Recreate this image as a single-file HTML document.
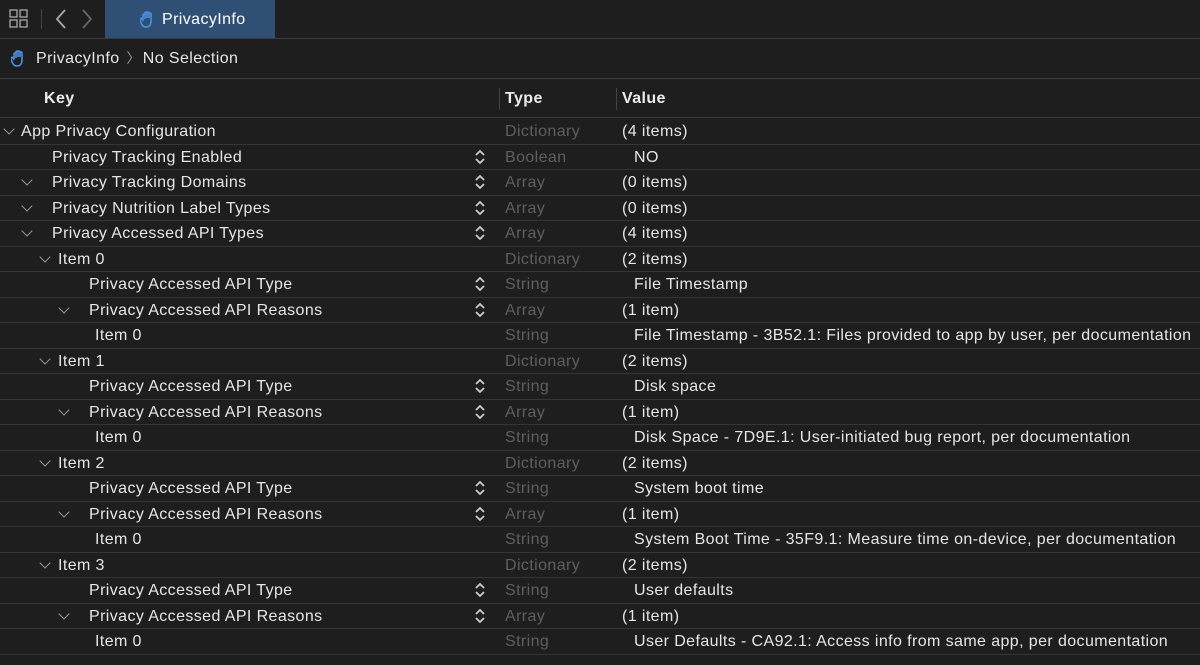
<!DOCTYPE html>
<html><head><meta charset="utf-8"><style>
body{margin:0;width:1200px;height:665px;background:#1e1e1e;overflow:hidden;font-family:"Liberation Sans",sans-serif;color:#e6e6e6;position:relative;letter-spacing:0.4px}
.a{position:absolute;white-space:nowrap}
.top{left:0;top:0;width:1200px;height:38px;background:#1e1e1e;border-bottom:1px solid #3a3a3a}
.tab{left:105px;top:0;width:170px;height:38px;background:#2f4f75}
.bc{left:0;top:39px;width:1200px;height:39px;border-bottom:1px solid #3c3c3c}
.hd{left:0;top:79px;width:1200px;height:38px;border-bottom:1px solid #3c3c3c}
.r{position:absolute;left:0;width:1200px;height:25.5px;border-bottom:1px solid #353535;font-size:16px;line-height:27px}
.r span{position:absolute;top:0;white-space:nowrap}
.t{left:505px;color:#5f5f5f}
.ch{width:7px;height:7px;border-right:1.8px solid #9a9a9a;border-bottom:1.8px solid #9a9a9a;transform:rotate(45deg);top:7px!important}
.st{position:absolute;left:474px;top:3px;width:12px;height:20px}
</style></head><body>
<div class="a top"></div>
<div class="a tab"></div>
<svg class="a" style="left:9px;top:9px" width="20" height="20" viewBox="0 0 20 20" fill="none" stroke="#aaa" stroke-width="1.3"><rect x="1" y="1" width="7" height="7"/><rect x="11" y="1" width="7" height="7"/><rect x="1" y="11" width="7" height="7"/><rect x="11" y="11" width="7" height="7"/></svg>
<div class="a" style="left:41px;top:9px;width:1px;height:20px;background:#444"></div>
<svg class="a" style="left:52px;top:8px" width="44" height="22" fill="none" stroke-width="1.8"><path d="M13 2 L5 11 L13 20" stroke="#aaa"/><path d="M31 2 L39 11 L31 20" stroke="#666"/></svg>
<svg class="a" style="left:140px;top:10px" width="14" height="19" viewBox="0 0 14 19" fill="none" stroke="#4a90e2" stroke-width="1.6"><path d="M3 10V5a1 1 0 0 1 2 0V9M5 8V3a1 1 0 0 1 2 0v5M7 8V3a1 1 0 0 1 2 0v5M9 8V4a1 1 0 0 1 2 0v7c0 4-2 6-5 6s-4-2-5-4l-1-3a1 1 0 0 1 2-1l1 2"/></svg>
<div class="a" style="left:162px;top:11px;font-size:16px;color:#fff">PrivacyInfo</div>
<div class="a bc"></div>
<svg class="a" style="left:11px;top:49px" width="14" height="19" viewBox="0 0 14 19" fill="none" stroke="#4a90e2" stroke-width="1.6"><path d="M3 10V5a1 1 0 0 1 2 0V9M5 8V3a1 1 0 0 1 2 0v5M7 8V3a1 1 0 0 1 2 0v5M9 8V4a1 1 0 0 1 2 0v7c0 4-2 6-5 6s-4-2-5-4l-1-3a1 1 0 0 1 2-1l1 2"/></svg>
<div class="a" style="left:36px;top:48px;font-size:16px;line-height:20px;height:20px;color:#e6e6e6">PrivacyInfo <span style="color:#999;margin:0 2px;font-size:14px">〉</span>No Selection</div>
<div class="a hd"></div>
<div class="a" style="left:44px;top:90px;font-size:16px;font-weight:bold;color:#ececec">Key</div>
<div class="a" style="left:499px;top:88px;width:1px;height:22px;background:#444"></div>
<div class="a" style="left:505px;top:90px;font-size:16px;font-weight:bold;color:#ececec">Type</div>
<div class="a" style="left:616px;top:88px;width:1px;height:22px;background:#444"></div>
<div class="a" style="left:622px;top:90px;font-size:16px;font-weight:bold;color:#ececec">Value</div>

<div class="r" style="top:118px"><span class="ch" style="left:5px"></span><span style="left:21px">App Privacy Configuration</span><span class="t">Dictionary</span><span style="left:622px">(4 items)</span></div>
<div class="r" style="top:143.5px"><span style="left:52px">Privacy Tracking Enabled</span><svg class="st" viewBox="0 0 12 20" fill="none" stroke="#ccc" stroke-width="1.8"><path d="M2 8l4-4 4 4M2 12l4 4 4-4"/></svg><span class="t">Boolean</span><span style="left:634px">NO</span></div>
<div class="r" style="top:169px"><span class="ch" style="left:23px"></span><span style="left:52px">Privacy Tracking Domains</span><svg class="st" viewBox="0 0 12 20" fill="none" stroke="#ccc" stroke-width="1.8"><path d="M2 8l4-4 4 4M2 12l4 4 4-4"/></svg><span class="t">Array</span><span style="left:622px">(0 items)</span></div>
<div class="r" style="top:194.5px"><span class="ch" style="left:23px"></span><span style="left:52px">Privacy Nutrition Label Types</span><svg class="st" viewBox="0 0 12 20" fill="none" stroke="#ccc" stroke-width="1.8"><path d="M2 8l4-4 4 4M2 12l4 4 4-4"/></svg><span class="t">Array</span><span style="left:622px">(0 items)</span></div>
<div class="r" style="top:220px"><span class="ch" style="left:23px"></span><span style="left:52px">Privacy Accessed API Types</span><svg class="st" viewBox="0 0 12 20" fill="none" stroke="#ccc" stroke-width="1.8"><path d="M2 8l4-4 4 4M2 12l4 4 4-4"/></svg><span class="t">Array</span><span style="left:622px">(4 items)</span></div>

<div class="r" style="top:245.5px"><span class="ch" style="left:41px"></span><span style="left:58px">Item 0</span><span class="t">Dictionary</span><span style="left:622px">(2 items)</span></div>
<div class="r" style="top:271px"><span style="left:89px">Privacy Accessed API Type</span><svg class="st" viewBox="0 0 12 20" fill="none" stroke="#ccc" stroke-width="1.8"><path d="M2 8l4-4 4 4M2 12l4 4 4-4"/></svg><span class="t">String</span><span style="left:634px">File Timestamp</span></div>
<div class="r" style="top:296.5px"><span class="ch" style="left:60px"></span><span style="left:89px">Privacy Accessed API Reasons</span><svg class="st" viewBox="0 0 12 20" fill="none" stroke="#ccc" stroke-width="1.8"><path d="M2 8l4-4 4 4M2 12l4 4 4-4"/></svg><span class="t">Array</span><span style="left:622px">(1 item)</span></div>
<div class="r" style="top:322px"><span style="left:95px">Item 0</span><span class="t">String</span><span style="left:634px">File Timestamp - 3B52.1: Files provided to app by user, per documentation</span></div>

<div class="r" style="top:347.5px"><span class="ch" style="left:41px"></span><span style="left:58px">Item 1</span><span class="t">Dictionary</span><span style="left:622px">(2 items)</span></div>
<div class="r" style="top:373px"><span style="left:89px">Privacy Accessed API Type</span><svg class="st" viewBox="0 0 12 20" fill="none" stroke="#ccc" stroke-width="1.8"><path d="M2 8l4-4 4 4M2 12l4 4 4-4"/></svg><span class="t">String</span><span style="left:634px">Disk space</span></div>
<div class="r" style="top:398.5px"><span class="ch" style="left:60px"></span><span style="left:89px">Privacy Accessed API Reasons</span><svg class="st" viewBox="0 0 12 20" fill="none" stroke="#ccc" stroke-width="1.8"><path d="M2 8l4-4 4 4M2 12l4 4 4-4"/></svg><span class="t">Array</span><span style="left:622px">(1 item)</span></div>
<div class="r" style="top:424px"><span style="left:95px">Item 0</span><span class="t">String</span><span style="left:634px">Disk Space - 7D9E.1: User-initiated bug report, per documentation</span></div>

<div class="r" style="top:449.5px"><span class="ch" style="left:41px"></span><span style="left:58px">Item 2</span><span class="t">Dictionary</span><span style="left:622px">(2 items)</span></div>
<div class="r" style="top:475px"><span style="left:89px">Privacy Accessed API Type</span><svg class="st" viewBox="0 0 12 20" fill="none" stroke="#ccc" stroke-width="1.8"><path d="M2 8l4-4 4 4M2 12l4 4 4-4"/></svg><span class="t">String</span><span style="left:634px">System boot time</span></div>
<div class="r" style="top:500.5px"><span class="ch" style="left:60px"></span><span style="left:89px">Privacy Accessed API Reasons</span><svg class="st" viewBox="0 0 12 20" fill="none" stroke="#ccc" stroke-width="1.8"><path d="M2 8l4-4 4 4M2 12l4 4 4-4"/></svg><span class="t">Array</span><span style="left:622px">(1 item)</span></div>
<div class="r" style="top:526px"><span style="left:95px">Item 0</span><span class="t">String</span><span style="left:634px">System Boot Time - 35F9.1: Measure time on-device, per documentation</span></div>

<div class="r" style="top:551.5px"><span class="ch" style="left:41px"></span><span style="left:58px">Item 3</span><span class="t">Dictionary</span><span style="left:622px">(2 items)</span></div>
<div class="r" style="top:577px"><span style="left:89px">Privacy Accessed API Type</span><svg class="st" viewBox="0 0 12 20" fill="none" stroke="#ccc" stroke-width="1.8"><path d="M2 8l4-4 4 4M2 12l4 4 4-4"/></svg><span class="t">String</span><span style="left:634px">User defaults</span></div>
<div class="r" style="top:602.5px"><span class="ch" style="left:60px"></span><span style="left:89px">Privacy Accessed API Reasons</span><svg class="st" viewBox="0 0 12 20" fill="none" stroke="#ccc" stroke-width="1.8"><path d="M2 8l4-4 4 4M2 12l4 4 4-4"/></svg><span class="t">Array</span><span style="left:622px">(1 item)</span></div>
<div class="r" style="top:628px"><span style="left:95px">Item 0</span><span class="t">String</span><span style="left:634px">User Defaults - CA92.1: Access info from same app, per documentation</span></div>
</body></html>
